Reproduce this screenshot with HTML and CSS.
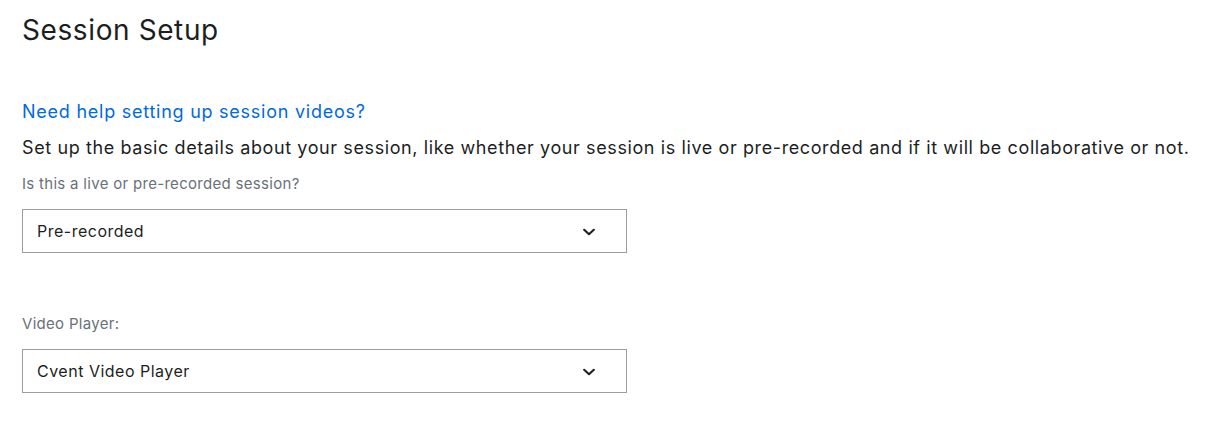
FILE: index.html
```html
<!DOCTYPE html>
<html lang="en">
<head>
    <meta charset="UTF-8">
    <title>Session Setup</title>
    <link rel="stylesheet" href="styles.css">
</head>
<body>
    <div class="page">
        <h1 class="title">Session Setup</h1>

        <a class="help-link" href="#">Need help setting up session videos?</a>
        <p class="intro">Set up the basic details about your session, like whether your session is live or pre-recorded and if it will be collaborative or not.</p>

        <div class="field">
            <label class="field-label">Is this a live or pre-recorded session?</label>
            <div class="select">
                <span class="select-value">Pre-recorded</span>
                <svg class="chevron" width="12" height="8" viewBox="0 0 12 8"><path d="M1.2 1.8 L6 6.2 L10.8 1.8" fill="none" stroke="#1f2329" stroke-width="2.2" stroke-linecap="round" stroke-linejoin="round"/></svg>
            </div>
        </div>

        <div class="field field-spaced">
            <label class="field-label">Video Player:</label>
            <div class="select">
                <span class="select-value">Cvent Video Player</span>
                <svg class="chevron" width="12" height="8" viewBox="0 0 12 8"><path d="M1.2 1.8 L6 6.2 L10.8 1.8" fill="none" stroke="#1f2329" stroke-width="2.2" stroke-linecap="round" stroke-linejoin="round"/></svg>
            </div>
        </div>
    </div>
</body>
</html>
```

FILE: styles.css
```css
:root {
    --text-color: #1b1f24;
    --muted-color: #69717a;
    --link-color: #006ae1;
    --border-color: #9a9ea4;
}
body {
    margin: 0;
    background: #fff;
    color: var(--text-color);
    font-family: Inter, 'Noto Sans', sans-serif;
}
.page {
    padding: 12px 22px;
}
.title {
    font-size: 28px;
    font-weight: 400;
    margin: 0;
    line-height: 36px;
    letter-spacing: 0.6px;
}
.help-link {
    display: block;
    margin-top: 51px;
    color: var(--link-color);
    text-decoration: none;
    font-size: 18px;
    line-height: 26px;
    letter-spacing: 0.75px;
}
.intro {
    margin: 10px 0 0;
    font-size: 18px;
    line-height: 26px;
    letter-spacing: 0.6px;
}
.field {
    margin-top: 13px;
}
.field-spaced {
    margin-top: 61px;
}
.field-label {
    display: block;
    font-size: 15px;
    line-height: 20px;
    letter-spacing: 0.3px;
    color: var(--muted-color);
}
.select {
    margin-top: 15px;
    width: 605px;
    height: 44px;
    box-sizing: border-box;
    border: 1px solid var(--border-color);
    display: flex;
    align-items: center;
    justify-content: space-between;
    padding: 0 31px 0 14px;
}
.select-value {
    font-size: 16px;
    letter-spacing: 0.5px;
}
.chevron {
    margin-top: 2px;
}
```
